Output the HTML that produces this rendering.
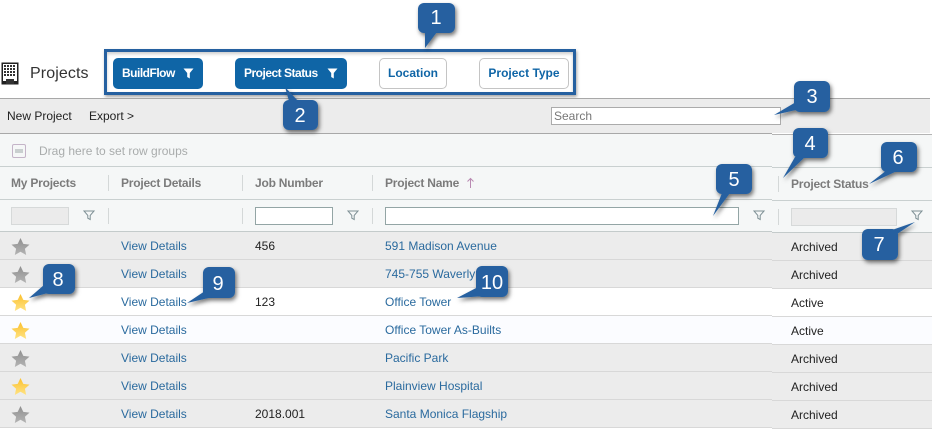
<!DOCTYPE html>
<html><head><meta charset="utf-8"><style>
html,body{margin:0;padding:0;background:#fff}
body{width:932px;height:443px;position:relative;overflow:hidden;font-family:"Liberation Sans",sans-serif;font-size:12px;color:#222}
.a{position:absolute;white-space:nowrap}
.r{position:absolute;height:27px;border-bottom:1px solid #d8d8d8}
.l{left:0;width:772px}.rr{left:772px;width:160px}
.g{background:#ececec}.w{background:#fff}.b{background:#fbfcff}
.t{position:absolute;white-space:nowrap;line-height:14px}
.lk{color:#2a6a9e}
.h{position:absolute;font-weight:bold;color:#7b7b7b;line-height:14px;white-space:nowrap;letter-spacing:-.22px}
.sep{position:absolute;width:1px;height:16px;background:#d4d8d8}
.btn{position:absolute;top:58px;height:31px;border-radius:5px;line-height:31px;font-weight:bold;box-sizing:border-box;text-align:left;white-space:nowrap}
.on{background:#0f65a6;color:#fff;letter-spacing:-.5px}
.off{background:#fff;color:#0f65a6;border:1px solid #c4c4c4;line-height:29px;text-align:center}
.inp{position:absolute;box-sizing:border-box;background:#fff;border:1px solid #93a5a5}
.dis{position:absolute;box-sizing:border-box;background:#ebebeb;border:1px solid #d6d9d9}
svg{position:absolute}
</style></head><body>

<svg style="left:1px;top:62px" width="18" height="23" viewBox="0 0 18 23"><rect x="0.5" y="0.5" width="17" height="22" fill="#222"/><rect x="2" y="2" width="14" height="17" fill="#fff"/>
<g fill="#333"><rect x="3" y="3" width="2" height="2"/><rect x="6" y="3" width="2" height="2"/><rect x="9" y="3" width="2" height="2"/><rect x="12" y="3" width="2" height="2"/><rect x="3" y="6" width="2" height="2"/><rect x="6" y="6" width="2" height="2"/><rect x="9" y="6" width="2" height="2"/><rect x="12" y="6" width="2" height="2"/><rect x="3" y="9" width="2" height="2"/><rect x="6" y="9" width="2" height="2"/><rect x="9" y="9" width="2" height="2"/><rect x="12" y="9" width="2" height="2"/><rect x="3" y="12" width="2" height="2"/><rect x="6" y="12" width="2" height="2"/><rect x="9" y="12" width="2" height="2"/><rect x="12" y="12" width="2" height="2"/><rect x="5" y="17" width="8" height="5"/></g></svg>
<div class="a" style="left:30px;top:65px;font-size:16px;line-height:18px;color:#333;letter-spacing:.1px">Projects</div>

<div class="a" style="left:104px;top:49px;width:472px;height:46px;box-sizing:border-box;border:3px solid #2560a0;box-shadow:1px 2px 3px rgba(0,0,0,.35), inset 0 2px 3px rgba(0,0,0,.2)"></div>
<div class="btn on" style="left:113px;width:90px;padding-left:9px">BuildFlow</div>
<svg style="left:183px;top:67px" width="11" height="12" viewBox="0 0 11 12"><path d="M0.5 1.5H10.5L6.8 6V11.5L4.2 10V6Z" fill="#fff"/></svg>
<div class="btn on" style="left:235px;width:112px;padding-left:9px">Project Status</div>
<svg style="left:327px;top:67px" width="11" height="12" viewBox="0 0 11 12"><path d="M0.5 1.5H10.5L6.8 6V11.5L4.2 10V6Z" fill="#fff"/></svg>
<div class="btn off" style="left:379px;width:68px">Location</div>
<div class="btn off" style="left:479px;width:90px">Project Type</div>

<!-- toolbar -->
<div class="a" style="left:0;top:98px;width:930px;height:35px;background:#ececec;border-top:1px solid #a8a8a8;box-sizing:border-box"></div>
<div class="a" style="left:0;top:133px;width:772px;height:1px;background:#a8a8a8"></div>
<div class="t" style="left:7px;top:109px;color:#222">New Project</div>
<div class="t" style="left:89px;top:109px;color:#222">Export &gt;</div>
<div class="a" style="left:551px;top:107px;width:230px;height:18px;box-sizing:border-box;background:#fff;border:1px solid #ababab;color:#777;line-height:16px;padding-left:2px">Search</div>

<!-- group panel + header left -->
<div class="a" style="left:0;top:134px;width:772px;height:97px;background:#f5f7f7"></div>
<div class="a" style="left:772px;top:134px;width:160px;height:98px;background:#f5f7f7"></div>
<div class="a" style="left:772px;top:134px;width:160px;height:1px;background:#b4b4b4"></div>
<div class="a" style="left:0;top:166px;width:772px;height:1px;background:#c9d0d0"></div>
<div class="a" style="left:772px;top:167px;width:160px;height:1px;background:#c9d0d0"></div>
<div class="a" style="left:0;top:199px;width:772px;height:1px;background:#c9d0d0"></div>
<div class="a" style="left:772px;top:200px;width:160px;height:1px;background:#c9d0d0"></div>
<svg style="left:12px;top:144px" width="14" height="14" viewBox="0 0 14 14"><rect x="0.5" y="0.5" width="13" height="13" rx="1.5" fill="none" stroke="#c4b4c8"/><path d="M3 5h8v4H3z" fill="#c9cfcf"/></svg>
<div class="t" style="left:39px;top:144px;color:#a9acac">Drag here to set row groups</div>

<div class="h" style="left:11px;top:176px">My Projects</div>
<div class="h" style="left:121px;top:176px">Project Details</div>
<div class="h" style="left:255px;top:176px">Job Number</div>
<div class="h" style="left:385px;top:176px">Project Name</div>
<svg style="left:466px;top:177px" width="9" height="12" viewBox="0 0 9 12"><path d="M4.5 1.5V11M1.5 4.5L4.5 1.5L7.5 4.5" fill="none" stroke="#b98ab2"/></svg>
<div class="h" style="left:791px;top:177px">Project Status</div>
<div class="sep" style="left:108px;top:175px"></div><div class="sep" style="left:242px;top:175px"></div><div class="sep" style="left:372px;top:175px"></div><div class="sep" style="left:778px;top:176px"></div>
<div class="sep" style="left:108px;top:208px"></div><div class="sep" style="left:242px;top:208px"></div><div class="sep" style="left:372px;top:208px"></div><div class="sep" style="left:778px;top:209px"></div>

<div class="dis" style="left:11px;top:207px;width:58px;height:18px"></div>
<div class="inp" style="left:255px;top:207px;width:78px;height:18px"></div>
<div class="inp" style="left:385px;top:207px;width:354px;height:18px"></div>
<div class="dis" style="left:791px;top:208px;width:106px;height:18px"></div>
<svg style="left:83px;top:210px" width="12" height="11" viewBox="0 0 12 11"><path d="M1 1H11L7.2 5.4V9.5L4.8 8.2V5.4Z" fill="none" stroke="#7e9095"/></svg>
<svg style="left:347px;top:210px" width="12" height="11" viewBox="0 0 12 11"><path d="M1 1H11L7.2 5.4V9.5L4.8 8.2V5.4Z" fill="none" stroke="#7e9095"/></svg>
<svg style="left:753px;top:210px" width="12" height="11" viewBox="0 0 12 11"><path d="M1 1H11L7.2 5.4V9.5L4.8 8.2V5.4Z" fill="none" stroke="#7e9095"/></svg>
<svg style="left:911px;top:210px" width="12" height="11" viewBox="0 0 12 11"><path d="M1 1H11L7.2 5.4V9.5L4.8 8.2V5.4Z" fill="none" stroke="#7e9095"/></svg>

<!-- rows left -->
<div class="a" style="left:0;top:231px;width:772px;height:1px;background:#c4cbcb"></div>
<div class="r l g" style="top:232px"></div>
<div class="r l g" style="top:260px"></div>
<div class="r l w" style="top:288px"></div>
<div class="r l b" style="top:316px"></div>
<div class="r l g" style="top:344px"></div>
<div class="r l g" style="top:372px"></div>
<div class="r l g" style="top:400px"></div>
<!-- rows right -->
<div class="a" style="left:772px;top:232px;width:160px;height:1px;background:#c4cbcb"></div>
<div class="r rr g" style="top:233px"></div>
<div class="r rr g" style="top:261px"></div>
<div class="r rr w" style="top:289px"></div>
<div class="r rr b" style="top:317px"></div>
<div class="r rr g" style="top:345px"></div>
<div class="r rr g" style="top:373px"></div>
<div class="r rr g" style="top:401px"></div>

<svg style="left:0;top:232px" width="42" height="196" viewBox="0 232 42 196">
<defs>
<linearGradient id="gs" x1="0" y1="0" x2="0" y2="1"><stop offset="0" stop-color="#8f8f8f"/><stop offset="1" stop-color="#b4b4b4"/></linearGradient>
<linearGradient id="ys" x1="0" y1="0" x2="0" y2="1"><stop offset="0" stop-color="#fbc02d"/><stop offset="1" stop-color="#ffe384"/></linearGradient>
<path id="st" d="M0 -9L2.8 -3.1L9 -2.4L4.4 1.8L5.7 8L0 4.8L-5.7 8L-4.4 1.8L-9 -2.4L-2.8 -3.1Z"/>
</defs>
<use href="#st" x="20.5" y="247" fill="url(#gs)"/>
<use href="#st" x="20.5" y="275" fill="url(#gs)"/>
<use href="#st" x="20.5" y="303" fill="url(#ys)"/>
<use href="#st" x="20.5" y="331" fill="url(#ys)"/>
<use href="#st" x="20.5" y="359" fill="url(#gs)"/>
<use href="#st" x="20.5" y="387" fill="url(#ys)"/>
<use href="#st" x="20.5" y="415" fill="url(#gs)"/>
</svg>

<div class="t lk" style="left:121px;top:239px">View Details</div>
<div class="t lk" style="left:121px;top:267px">View Details</div>
<div class="t lk" style="left:121px;top:295px">View Details</div>
<div class="t lk" style="left:121px;top:323px">View Details</div>
<div class="t lk" style="left:121px;top:351px">View Details</div>
<div class="t lk" style="left:121px;top:379px">View Details</div>
<div class="t lk" style="left:121px;top:407px">View Details</div>

<div class="t" style="left:255px;top:239px">456</div>
<div class="t" style="left:255px;top:295px">123</div>
<div class="t" style="left:255px;top:407px">2018.001</div>

<div class="t lk" style="left:385px;top:239px">591 Madison Avenue</div>
<div class="t lk" style="left:385px;top:267px">745-755 Waverly</div>
<div class="t lk" style="left:385px;top:295px">Office Tower</div>
<div class="t lk" style="left:385px;top:323px">Office Tower As-Builts</div>
<div class="t lk" style="left:385px;top:351px">Pacific Park</div>
<div class="t lk" style="left:385px;top:379px">Plainview Hospital</div>
<div class="t lk" style="left:385px;top:407px">Santa Monica Flagship</div>

<div class="t" style="left:791px;top:240px">Archived</div>
<div class="t" style="left:791px;top:268px">Archived</div>
<div class="t" style="left:791px;top:296px">Active</div>
<div class="t" style="left:791px;top:324px">Active</div>
<div class="t" style="left:791px;top:352px">Archived</div>
<div class="t" style="left:791px;top:380px">Archived</div>
<div class="t" style="left:791px;top:408px">Archived</div>

<!-- callouts -->
<svg style="left:0;top:0" width="932" height="443" viewBox="0 0 932 443">
<defs><filter id="ds" x="-40%" y="-40%" width="190%" height="190%"><feDropShadow dx="1.5" dy="2.5" stdDeviation="2.2" flood-color="#000" flood-opacity=".55"/></filter></defs>
<g fill="#2560a0">
<g filter="url(#ds)"><rect x="418" y="3" width="37" height="30" rx="6"/><path d="M425 32L425 48L437 32Z"/></g>
<g filter="url(#ds)"><rect x="283" y="100" width="35" height="30" rx="6"/><path d="M289 101L285 87L298 101Z"/></g>
<g filter="url(#ds)"><rect x="794" y="81" width="36" height="31" rx="6"/><path d="M796 102L774 115L796 110Z"/></g>
<g filter="url(#ds)"><rect x="793" y="128" width="35" height="30" rx="6"/><path d="M795 157L783 178L805 157Z"/></g>
<g filter="url(#ds)"><rect x="716" y="164" width="36" height="30" rx="6"/><path d="M722 193L713 216L730 193Z"/></g>
<g filter="url(#ds)"><rect x="881" y="142" width="36" height="30" rx="6"/><path d="M887 170L869 184L897 171Z"/></g>
<g filter="url(#ds)"><rect x="862" y="229" width="36" height="31" rx="6"/><path d="M892 230L915 222L897 234Z"/></g>
<g filter="url(#ds)"><rect x="43" y="264" width="32" height="30" rx="6"/><path d="M44 285L29 298L48 293Z"/></g>
<g filter="url(#ds)"><rect x="203" y="267" width="32" height="31" rx="6"/><path d="M205 291L187 303L213 297Z"/></g>
<g filter="url(#ds)"><rect x="476" y="266" width="32" height="31" rx="6"/><path d="M478 287L457 298L485 296Z"/></g>
</g>
<g fill="#fff" font-family="Liberation Sans, sans-serif" font-size="20" text-anchor="middle">
<text x="436" y="24">1</text><text x="300" y="122">2</text><text x="812" y="103">3</text><text x="810" y="150">4</text><text x="734" y="186">5</text><text x="898" y="164">6</text><text x="879" y="251">7</text><text x="58" y="286">8</text><text x="218" y="290">9</text><text x="492" y="289">10</text>
</g>
</svg>
</body></html>
